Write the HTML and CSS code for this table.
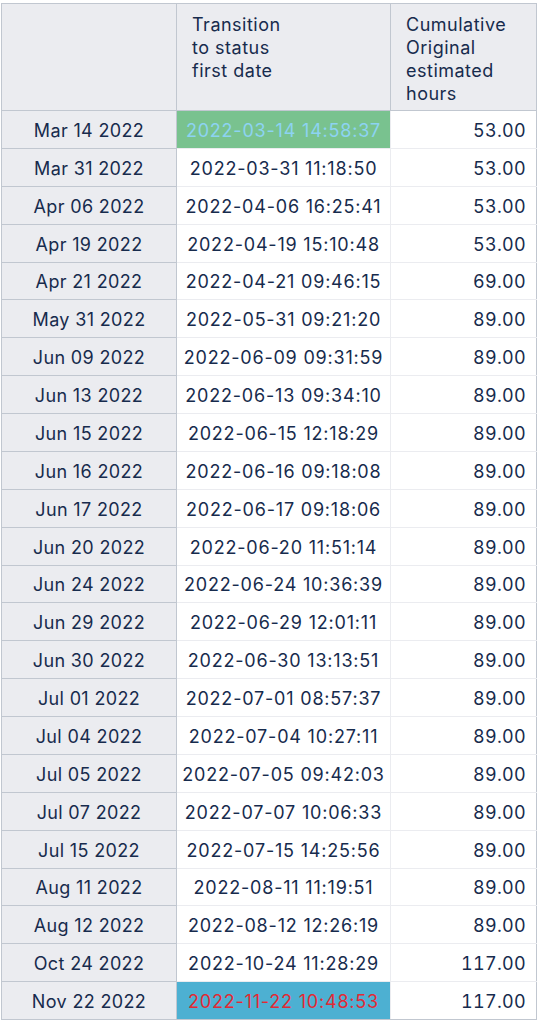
FILE: index.html
```html
<!DOCTYPE html>
<html>
<head>
<meta charset="utf-8">
<link rel="stylesheet" href="styles.css">
</head>
<body>
<table class="grid">
  <colgroup><col class="c1"><col class="c2"><col class="c3"></colgroup>
  <thead>
    <tr class="head">
      <th class="corner"></th>
      <th>Transition<br>to status<br>first date</th>
      <th>Cumulative<br>Original<br>estimated<br>hours</th>
    </tr>
  </thead>
  <tbody>
    <tr><td class="lbl">Mar 14 2022</td><td class="dt green">2022-03-14 14:58:37</td><td class="num">53.00</td></tr>
    <tr><td class="lbl">Mar 31 2022</td><td class="dt">2022-03-31 11:18:50</td><td class="num">53.00</td></tr>
    <tr><td class="lbl">Apr 06 2022</td><td class="dt">2022-04-06 16:25:41</td><td class="num">53.00</td></tr>
    <tr><td class="lbl">Apr 19 2022</td><td class="dt">2022-04-19 15:10:48</td><td class="num">53.00</td></tr>
    <tr><td class="lbl">Apr 21 2022</td><td class="dt">2022-04-21 09:46:15</td><td class="num">69.00</td></tr>
    <tr><td class="lbl">May 31 2022</td><td class="dt">2022-05-31 09:21:20</td><td class="num">89.00</td></tr>
    <tr><td class="lbl">Jun 09 2022</td><td class="dt">2022-06-09 09:31:59</td><td class="num">89.00</td></tr>
    <tr><td class="lbl">Jun 13 2022</td><td class="dt">2022-06-13 09:34:10</td><td class="num">89.00</td></tr>
    <tr><td class="lbl">Jun 15 2022</td><td class="dt">2022-06-15 12:18:29</td><td class="num">89.00</td></tr>
    <tr><td class="lbl">Jun 16 2022</td><td class="dt">2022-06-16 09:18:08</td><td class="num">89.00</td></tr>
    <tr><td class="lbl">Jun 17 2022</td><td class="dt">2022-06-17 09:18:06</td><td class="num">89.00</td></tr>
    <tr><td class="lbl">Jun 20 2022</td><td class="dt">2022-06-20 11:51:14</td><td class="num">89.00</td></tr>
    <tr><td class="lbl">Jun 24 2022</td><td class="dt">2022-06-24 10:36:39</td><td class="num">89.00</td></tr>
    <tr><td class="lbl">Jun 29 2022</td><td class="dt">2022-06-29 12:01:11</td><td class="num">89.00</td></tr>
    <tr><td class="lbl">Jun 30 2022</td><td class="dt">2022-06-30 13:13:51</td><td class="num">89.00</td></tr>
    <tr><td class="lbl">Jul 01 2022</td><td class="dt">2022-07-01 08:57:37</td><td class="num">89.00</td></tr>
    <tr><td class="lbl">Jul 04 2022</td><td class="dt">2022-07-04 10:27:11</td><td class="num">89.00</td></tr>
    <tr><td class="lbl">Jul 05 2022</td><td class="dt">2022-07-05 09:42:03</td><td class="num">89.00</td></tr>
    <tr><td class="lbl">Jul 07 2022</td><td class="dt">2022-07-07 10:06:33</td><td class="num">89.00</td></tr>
    <tr><td class="lbl">Jul 15 2022</td><td class="dt">2022-07-15 14:25:56</td><td class="num">89.00</td></tr>
    <tr><td class="lbl">Aug 11 2022</td><td class="dt">2022-08-11 11:19:51</td><td class="num">89.00</td></tr>
    <tr><td class="lbl">Aug 12 2022</td><td class="dt">2022-08-12 12:26:19</td><td class="num">89.00</td></tr>
    <tr><td class="lbl">Oct 24 2022</td><td class="dt">2022-10-24 11:28:29</td><td class="num">117.00</td></tr>
    <tr><td class="lbl">Nov 22 2022</td><td class="dt blue">2022-11-22 10:48:53</td><td class="num">117.00</td></tr>
  </tbody>
</table>
</body>
</html>
```

FILE: styles.css
```css
html, body {
  margin: 0;
  padding: 0;
  background: #ffffff;
}
body {
  padding: 3px 4px 0 1px;
  font-family: Inter, "Noto Sans", "Liberation Sans", sans-serif;
  color: #172b4d;
}
.grid {
  border-collapse: collapse;
  table-layout: fixed;
  width: 535px;
  font-size: 18px;
}
.c1 { width: 175px; }
.c2 { width: 214px; }
.c3 { width: 146px; }
.grid th {
  background: #ebecf0;
  border: 1px solid #c1c7d0;
  font-weight: 400;
  text-align: left;
  vertical-align: top;
  padding: 9px 8px 0 15px;
  line-height: 23px;
  height: 97px;
  font-size: 18px;
  letter-spacing: 0.5px;
}
.grid td {
  height: 33.875px;
  padding: 3px 10px 0 10px;
  border: 1px solid #ebecf0;
  white-space: nowrap;
  line-height: 20px;
}
.grid td.lbl {
  background: #ebecf0;
  border-color: #c1c7d0;
  text-align: center;
  letter-spacing: 0.35px;
}
.grid td.dt {
  text-align: center;
  padding-left: 0;
  padding-right: 0;
  letter-spacing: 0.8px;
}
.grid td.num {
  text-align: right;
  border-right-color: #c1c7d0;
  letter-spacing: 0.3px;
  font-feature-settings: "tnum" 1;
}
.grid tbody tr:last-child td { border-bottom-color: #c1c7d0; }
.grid td.green {
  background: #79c28f;
  color: #8dd3f2;
}
.grid td.blue {
  background: #4db0d2;
  color: #e22a35;
}
```
